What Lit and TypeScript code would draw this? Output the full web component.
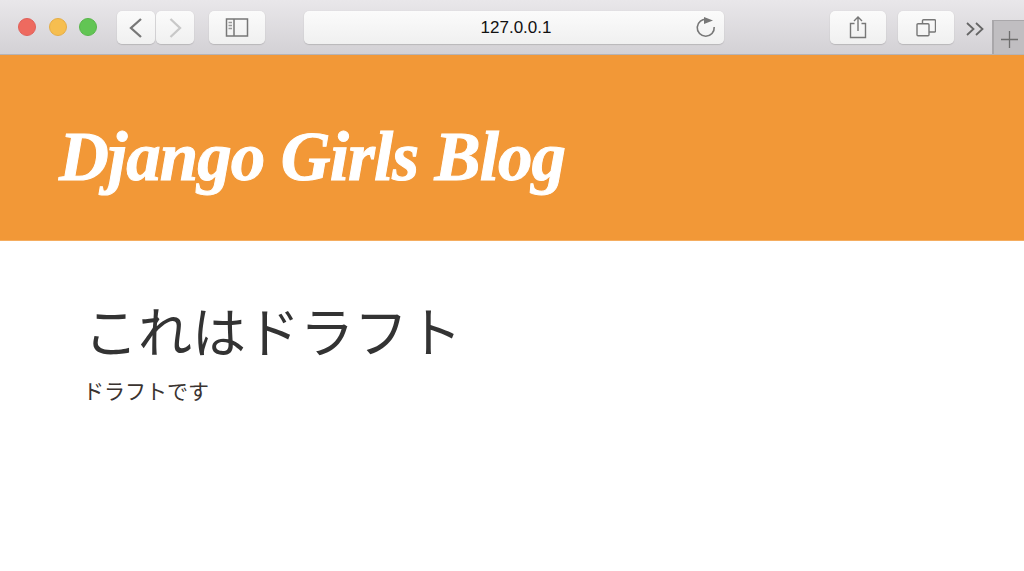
import { LitElement, html, css } from "lit";
import { customElement } from "lit/decorators.js";

@customElement("app-root")
export class AppRoot extends LitElement {
  static styles = css`
    :host { display: block; width: 1024px; height: 571px; background: #fff; overflow: hidden; }
    .toolbar {
      height: 55px; box-sizing: border-box; border-bottom: 1px solid #b5b3b6;
      background: linear-gradient(#e9e7ea, #d3d1d5);
      display: flex; align-items: flex-start; padding: 11px 0 0 18px;
    }
    .lights { display: flex; gap: 12.5px; padding-top: 7px; margin-right: 20px; }
    .light { width: 18px; height: 18px; border-radius: 50%; box-sizing: border-box; }
    .red { background: #ee6a5f; border: 1px solid #e0605a; }
    .yellow { background: #f6be4f; border: 1px solid #e5ad45; }
    .green { background: #62c554; border: 1px solid #58b64a; }
    .btn {
      height: 33px; box-sizing: border-box; border-radius: 5px;
      background: linear-gradient(#fbfbfb, #f0f0f0);
      box-shadow: 0 1px 1px #b9b7ba, 0 0 1px #c8c6c9;
      display: flex; align-items: center; justify-content: center;
    }
    .nav { width: 38px; }
    .next { margin-left: 1px; }
    .wide { width: 56px; }
    .side { margin-left: 15px; }
    .url {
      width: 420px; margin-left: 39px; margin-right: 106px; position: relative; padding-left: 4px;
      font: 17px "Liberation Sans", Arial, sans-serif; color: #111;
    }
    .reload { position: absolute; right: 8px; top: 5px; display: block; }
    .tabs { margin-left: 12px; }
    .more { width: 18px; margin-left: 12px; padding-top: 11px; display: block; }
    svg { display: block; fill: none; }
    .plus {
      width: 32px; height: 34px; box-sizing: border-box; margin-left: 8px; margin-top: 9px;
      background: #c0bec1; border: 1px solid #a9a7aa; border-width: 1px 0 0 2px;
      display: flex; align-items: center; justify-content: center; padding-top: 3px;
    }
    .banner {
      height: 186px; box-sizing: border-box; background: #f29837;
      padding: 60px 0 0 59px; border-bottom: 1px solid #f5ad60;
    }
    h1.logo {
      margin: 0; color: #fff; font: italic 700 69px/84px "Liberation Serif", "Times New Roman", serif;
      letter-spacing: -0.9px; white-space: nowrap;
      -webkit-text-stroke: 1px #fff;
    }
    main { padding: 54px 0 0 83px; color: #333; font-family: "Noto Sans CJK JP", "Noto Sans", sans-serif; }
    h2 { margin: 0 0 0 1px; font-size: 54px; line-height: 70px; font-weight: 400; }
    p { margin: 10px 0 0; font-size: 21px; line-height: 30px; color: #3a3330; }
  `;

  render() {
    return html`
      <div class="toolbar">
        <div class="lights">
          <div class="light red"></div><div class="light yellow"></div><div class="light green"></div>
        </div>
        <div class="btn nav">
          <svg width="14" height="20" viewBox="0 0 14 20"><path d="M12 1 2 10l10 9" stroke="#777" stroke-width="2.300"/></svg>
        </div>
        <div class="btn nav next">
          <svg width="14" height="20" viewBox="0 0 14 20"><path d="M2.500 1 12 10l-9.500 9" stroke="#c8c8c8" stroke-width="2.300"/></svg>
        </div>
        <div class="btn wide side">
          <svg width="24" height="19" viewBox="0 0 24 19">
            <rect x="1.500" y="1" width="21" height="17" stroke="#777" stroke-width="1.500"/>
            <path d="M9 1v17" stroke="#777" stroke-width="1.500"/>
            <path d="M3.500 4.500h3.500M3.500 7.500h3.500M3.500 10.500h3.500" stroke="#999" stroke-width="1.600"/>
          </svg>
        </div>
        <div class="btn url">
          127.0.0.1
          <svg class="reload" width="22" height="24" viewBox="0 0 22 24">
            <path d="M13 3.300A8.500 8.500 0 1 0 20.200 11" stroke="#777" stroke-width="1.600"/>
            <path d="M10 1 19 4.500 10 8z" fill="#777"/>
          </svg>
        </div>
        <div class="btn wide">
          <svg width="18" height="24" viewBox="0 0 18 24">
            <path d="M5.500 7.500H1.500v14h15v-14h-4M9 15V1.500M5 5 9 1l4 4" stroke="#777" stroke-width="1.400"/>
          </svg>
        </div>
        <div class="btn wide tabs">
          <svg width="20" height="18" viewBox="0 0 20 18">
            <rect x="1" y="4.700" width="12" height="12" rx="1" stroke="#777" stroke-width="1.400"/>
            <path d="M6.500 4.700V1.700a1 1 0 0 1 1-1h11a1 1 0 0 1 1 1v10.300a1 1 0 0 1-1 1h-5.500" stroke="#777" stroke-width="1.400"/>
          </svg>
        </div>
        <div class="more">
          <svg width="18" height="14" viewBox="0 0 18 14"><path d="M1 1 7.500 7 1 13M10 1l6.500 6-6.500 6" stroke="#666" stroke-width="1.800"/></svg>
        </div>
        <div class="plus">
          <svg width="17" height="17" viewBox="0 0 17 17"><path d="M8.500 0v17M0 8.500h17" stroke="#6e6e6e" stroke-width="1.300"/></svg>
        </div>
      </div>
      <header class="banner"><h1 class="logo">Django Girls Blog</h1></header>
      <main>
        <h2>これはドラフト</h2>
        <p>ドラフトです</p>
      </main>
    `;
  }
}
